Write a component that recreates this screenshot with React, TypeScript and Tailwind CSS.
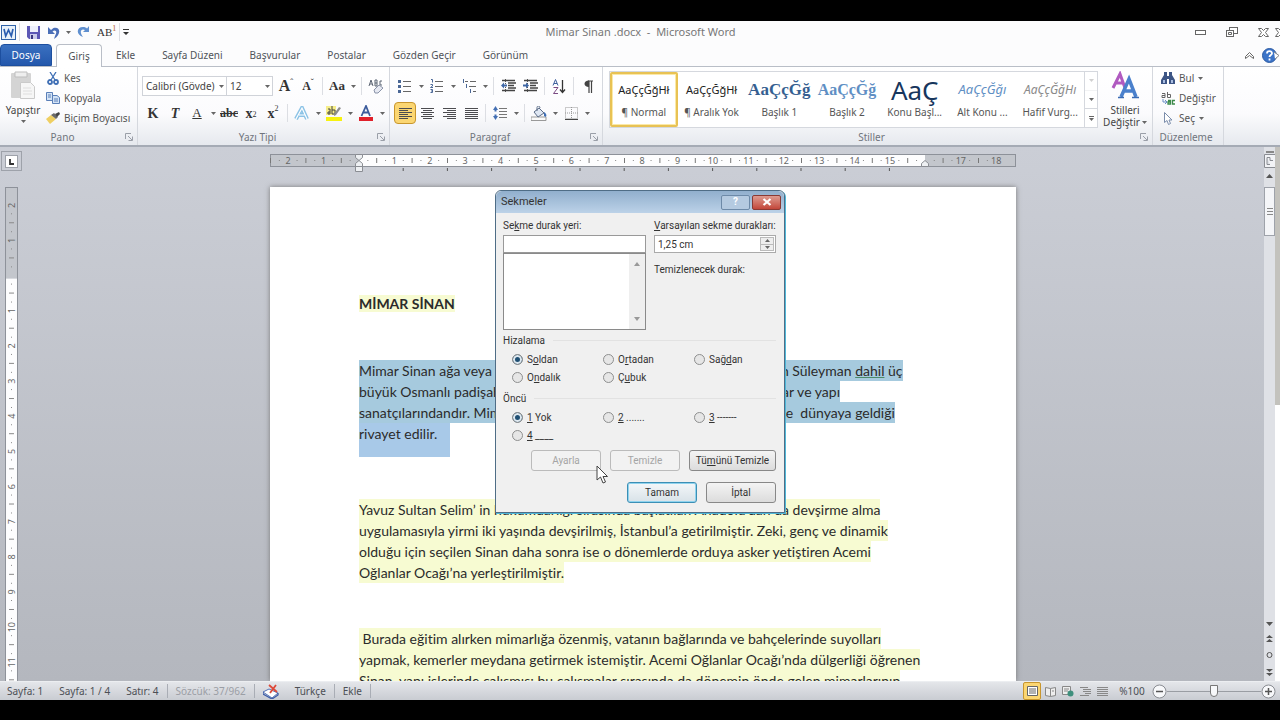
import type { ReactNode } from 'react'
import clsx from 'clsx'

const tabs = ['Ekle', 'Sayfa Düzeni', 'Başvurular', 'Postalar', 'Gözden Geçir', 'Görünüm']

const styles = [
  { name: '¶ Normal', sample: 'AaÇçĞğHł', look: 'text-[11px] text-[#222]' },
  { name: '¶ Aralık Yok', sample: 'AaÇçĞğHł', look: 'text-[11px] text-[#222]' },
  { name: 'Başlık 1', sample: 'AaÇçĞğ', look: "font-['Liberation_Serif',serif] text-[17px] font-bold text-[#365f91]" },
  { name: 'Başlık 2', sample: 'AaÇçĞğ', look: "font-['Liberation_Serif',serif] text-[16px] font-bold text-[#5f8fc4]" },
  { name: 'Konu Başl...', sample: 'AaÇ', look: 'text-[26px] text-[#17365d]' },
  { name: 'Alt Konu ...', sample: 'AaÇçĞğı', look: 'text-[13px] italic text-[#5f8fc4]' },
  { name: 'Hafif Vurg...', sample: 'AaÇçĞğHı', look: 'text-[12px] italic text-[#8a8a8a]' },
]

const second = [
  'Yavuz Sultan Selim’ in hükümdarlığı sırasında başlatılan Anadolu’dan da devşirme alma',
  'uygulamasıyla yirmi iki yaşında devşirilmiş, İstanbul’a getirilmiştir. Zeki, genç ve dinamik',
  'olduğu için seçilen Sinan daha sonra ise o dönemlerde orduya asker yetiştiren Acemi',
  'Oğlanlar Ocağı’na yerleştirilmiştir.',
]

const third = [
  ' Burada eğitim alırken mimarlığa özenmiş, vatanın bağlarında ve bahçelerinde suyolları',
  'yapmak, kemerler meydana getirmek istemiştir. Acemi Oğlanlar Ocağı’nda dülgerliği öğrenen',
  'Sinan, yapı işlerinde çalışmış; bu çalışmalar sırasında da dönemin önde gelen mimarlarının',
]

const Caret = () => (
  <svg width="5" height="3" viewBox="0 0 5 3" fill="#666">
    <path d="M0 0h5L2.5 3z" />
  </svg>
)

const Sep = () => (
  <div className="flex h-[18px] w-[7px] justify-center">
    <div className="w-px bg-[#dcdee3]" />
  </div>
)

function Tool({ label, caret, active, children }: { label: string; caret?: boolean; active?: boolean; children: ReactNode }) {
  return (
    <button type="button" aria-label={label} className="flex h-[22px] items-center">
      <span
        className={clsx(
          'flex h-[22px] w-[22px] items-center justify-center',
          active && 'rounded-sm border border-[#c8962e] bg-[#fbd672]'
        )}
      >
        {children}
      </span>
      {caret && (
        <span className="flex w-[10px] justify-center">
          <Caret />
        </span>
      )}
    </button>
  )
}

function Group({ title, launcher, className, children }: { title: string; launcher?: boolean; className?: string; children: ReactNode }) {
  return (
    <section className={clsx('flex shrink-0 flex-col border-r border-[#d5d8de]', className)}>
      <div className="flex h-16 items-start">{children}</div>
      <div className="flex h-4 items-center pr-1 text-[#70757d]">
        <span className="flex-1 text-center">{title}</span>
        {launcher && (
          <svg width="8" height="8" viewBox="0 0 8 8" fill="none" stroke="#9a9fa8">
            <path d="M.5 6V.5H6M3 3l4 4M7.500 3.500v4h-4" />
          </svg>
        )}
      </div>
    </section>
  )
}

function Lines({ kind }: { kind: 'left' | 'center' | 'right' | 'justify' }) {
  const paths = {
    left: 'M0 .5h13M0 2.500h9M0 4.500h13M0 6.500h9M0 8.500h13M0 10.500h9',
    center: 'M0 .5h13M2 2.500h9M0 4.500h13M2 6.500h9M0 8.500h13M2 10.500h9',
    right: 'M0 .5h13M4 2.500h9M0 4.500h13M4 6.500h9M0 8.500h13M4 10.500h9',
    justify: 'M0 .5h13M0 2.500h13M0 4.500h13M0 6.500h13M0 8.500h13M0 10.500h13',
  }
  return (
    <svg width="13" height="11" viewBox="0 0 13 11" stroke="#4c4c50">
      <path d={paths[kind]} />
    </svg>
  )
}

function ListIcon({ kind }: { kind: 'bullet' | 'number' | 'multi' }) {
  return (
    <svg width="14" height="14" viewBox="0 0 14 14">
      {kind === 'bullet' && (
        <>
          <path d="M0 1h3v3H0zM0 6h3v3H0zM0 11h3v3H0z" fill="#4a6796" />
          <path d="M5 2.500h8M5 7.500h8M5 12.500h8" stroke="#666" />
        </>
      )}
      {kind === 'number' && (
        <>
          <path d="M1 .5h1.500v3M.5 5.500h2v1.500l-2 1.500h2.500M.5 10.500h2v3h-2M1 12h1" stroke="#4a6796" fill="none" />
          <path d="M5 2.500h8M5 7.500h8M5 12.500h8" stroke="#666" />
        </>
      )}
      {kind === 'multi' && (
        <>
          <path d="M1.500 0v4M4.500 5v4M8.500 10v4" stroke="#4a6796" />
          <path d="M3 2.500h3M8 2.500h6M7 7.500h7M11 12.500h3" stroke="#666" />
        </>
      )}
    </svg>
  )
}

function IndentIcon({ out }: { out?: boolean }) {
  return (
    <svg width="15" height="14" viewBox="0 0 15 14">
      <path d="M1 1.500h13M7 4h8M7 6.500h6M7 9h8M1 11.500h13" stroke="#444" strokeWidth="1.300" />
      <path d="M4.500 0v14" stroke="#555" strokeDasharray="1 1" />
      <path d={out ? 'M0 6.500l3-3v2h3v2H3v2z' : 'M6 6.500l-3-3v2H0v2h3v2z'} fill="#3f67a5" />
    </svg>
  )
}

function TitleBar() {
  return (
    <header className="flex h-[22px] shrink-0 items-center bg-[#fcfcfd]">
      <div className="flex flex-1 items-center pl-px">
        <svg width="15" height="15" viewBox="0 0 15 15">
          <rect x=".5" y=".5" width="14" height="14" fill="#e8f1fa" stroke="#2f62a8" />
          <path d="M3 4l1.700 7L7.500 5l2.800 6L12 4" fill="none" stroke="#2a5db0" strokeWidth="1.700" />
        </svg>
        <Sep />
        <button type="button" aria-label="Kaydet" className="ml-1">
          <svg width="13" height="13" viewBox="0 0 13 13">
            <path d="M0 0h13v13H2L0 11z" fill="#5b57b5" />
            <path d="M3 0h8v6H3z" fill="#eef0fb" />
            <path d="M3 8h7v5H3z" fill="#c9cbea" />
            <path d="M4 9h2v4H4z" fill="#39367f" />
          </svg>
        </button>
        <button type="button" aria-label="Geri al" className="ml-2 flex items-center gap-1.5">
          <svg width="12" height="13" viewBox="0 0 12 13">
            <path d="M0 1v7h7L4.500 5.500C7 3 10 5 7 10l-1 3c8-5 6-13-.5-11L3 4z" fill="#4b6fb8" />
          </svg>
          <Caret />
        </button>
        <button type="button" aria-label="Yinele" className="ml-1.5">
          <svg width="12" height="12" viewBox="0 0 12 12">
            <path d="M12 0v6H6l2-2C4 2 2 6 6 11-1 9-1 1 6 1c2 0 3 .5 4 1.500z" fill="#5f8fcf" />
          </svg>
        </button>
        <button type="button" className="ml-2 flex items-start font-['Liberation_Serif',serif] text-[11px] leading-4 text-[#333]">
          AB<span className="text-[8px] leading-[10px] text-[#b3622d]">1</span>
        </button>
        <Sep />
        <svg width="6" height="6" viewBox="0 0 6 6" fill="#333">
          <path d="M0 0h6v1H0zM0 3h6L3 6z" />
        </svg>
      </div>
      <h1 className="text-[11px] whitespace-pre text-[#777]">Mimar Sinan .docx  -  Microsoft Word</h1>
      <div className="flex flex-1 items-center justify-end gap-5 overflow-hidden">
        <svg width="11" height="5" viewBox="0 0 11 5">
          <rect x=".5" y=".5" width="10" height="4" fill="#fff" stroke="#666" />
        </svg>
        <svg width="12" height="10" viewBox="0 0 12 10" fill="#fff" stroke="#666">
          <rect x="3.500" y=".5" width="8" height="6" />
          <rect x=".5" y="3.500" width="7" height="6" />
          <path d="M2.500 5.500h3v2h-3z" />
        </svg>
        <div className="flex gap-1.5">
          <svg width="11" height="9" viewBox="0 0 11 9" fill="#fff" stroke="#666">
            <path d="M.5.5h3l2 2 2-2h3L7.500 4.500l3 4h-3l-2-2-2 2h-3l3-4z" />
          </svg>
          <svg width="5" height="9" viewBox="0 0 5 9" fill="#fff" stroke="#666">
            <path d="M.5.5h3l2 2v4l-2 2h-3l3-4z" />
          </svg>
        </div>
      </div>
    </header>
  )
}

function TabRow() {
  return (
    <nav className="flex h-6 shrink-0 items-end border-b border-[#b9bec7] bg-[#fcfcfd] text-[#4f5359]">
      <button type="button" className="h-[22px] w-[52px] rounded-t-sm border border-[#1d4f9f] bg-linear-to-b from-[#3a70c0] to-[#2458ac] text-white">
        Dosya
      </button>
      <button type="button" className="ml-1 -mb-px h-[23px] w-[46px] rounded-t-sm border border-b-0 border-[#b9bec7] bg-white">
        Giriş
      </button>
      <div className="ml-[14px] flex h-[22px] flex-1 items-center gap-[27px]">
        {tabs.map((tab) => (
          <button key={tab} type="button">
            {tab}
          </button>
        ))}
      </div>
      <div className="flex h-[22px] items-center gap-2">
        <svg width="9" height="7" viewBox="0 0 9 7" fill="#fff" stroke="#666">
          <path d="M.5 4.500l4-4 4 4v2l-4-3-4 3z" />
        </svg>
        <svg width="18" height="15" viewBox="0 0 18 15">
          <circle cx="7.500" cy="7.500" r="7" fill="#3c74c8" stroke="#2d5ba3" />
          <path d="M5 5.500c0-3 5-3 5-.2C10 7 7.500 7 7.500 9M7.500 10.500v2" fill="none" stroke="#fff" strokeWidth="1.800" />
          <path d="M12 4l5 3.500-4 3.500" fill="#fff" stroke="#888" />
        </svg>
      </div>
    </nav>
  )
}

function ClipboardGroup() {
  return (
    <Group title="Pano" launcher className="w-[138px]">
      <button type="button" className="flex w-[46px] flex-col items-center pt-1">
        <svg width="26" height="29" viewBox="0 0 26 29">
          <rect x="1" y="2" width="20" height="25" rx="1" fill="#d4d4d4" />
          <path d="M5 1h12v5H5z" fill="#eee" stroke="#bdbdbd" />
          <path d="M10.500 11.500h10l4 4v12h-14z" fill="#f6f6f6" stroke="#cacaca" />
          <path d="M13 17h8M13 20h9M13 23h9" stroke="#dedede" />
        </svg>
        <span className="pt-0.5 leading-4 text-[#444]">Yapıştır</span>
        <span className="pt-0.5">
          <Caret />
        </span>
      </button>
      <div className="flex flex-col text-[#555]">
        <button type="button" className="mt-px flex h-5 items-center gap-1">
          <svg width="14" height="13" viewBox="0 0 14 13" fill="none" stroke="#3f6fb5">
            <path d="M4 0l5 8M10 0L5 8" strokeWidth="1.300" />
            <circle cx="4" cy="10" r="2" strokeWidth="1.800" />
            <circle cx="10" cy="10" r="2" strokeWidth="1.800" />
          </svg>
          Kes
        </button>
        <button type="button" className="flex h-5 items-center gap-1">
          <svg width="14" height="12" viewBox="0 0 14 12" fill="#d3e3f6" stroke="#5a7fb8">
            <path d="M.5.5h6v8h-6z" />
            <path d="M6.500 3.500h4.500l2.500 2v6h-7z" />
            <path d="M2 3h3M2 5h3M8 7h4M8 9h4" />
          </svg>
          Kopyala
        </button>
        <button type="button" className="flex h-5 items-center gap-1">
          <svg width="14" height="12" viewBox="0 0 14 12">
            <path d="M0 7l5-4 5 4-6 5z" fill="#efcf62" />
            <path d="M5 3l3-2 4 4-2 2z" fill="#6a6a6a" />
            <path d="M9 2l4-2 1 2-3 3z" fill="#444" />
          </svg>
          Biçim Boyacısı
        </button>
      </div>
    </Group>
  )
}

function FontGroup() {
  return (
    <Group title="Yazı Tipi" launcher className="w-[252px]">
      <div className="flex flex-col gap-[5px] pt-2 pl-1 font-['Liberation_Serif',serif] text-[#333]">
        <div className="flex items-center">
          <div className="mr-0.5 flex h-5 w-[131px] border border-[#d0d3d9] bg-white font-['Noto_Sans',sans-serif] text-[#444]">
            <label className="flex flex-1 items-center border-r border-[#d0d3d9] pr-0.5">
              <select aria-label="Yazı tipi" className="min-w-0 flex-1 appearance-none pl-[3px]">
                <option>Calibri (Gövde)</option>
              </select>
              <Caret />
            </label>
            <label className="flex w-[45px] items-center pr-0.5">
              <select aria-label="Yazı tipi boyutu" className="min-w-0 flex-1 appearance-none pl-[3px]">
                <option>12</option>
              </select>
              <Caret />
            </label>
          </div>
          <Tool label="Yazı tipini büyüt">
            <span className="text-[16px] font-bold">A</span>
            <sup className="text-[9px]">ˆ</sup>
          </Tool>
          <Tool label="Yazı tipini küçült">
            <span className="text-[12px] font-bold">A</span>
            <sup className="text-[9px]">ˇ</sup>
          </Tool>
          <Sep />
          <Tool label="Büyük/küçük harf" caret>
            <span className="text-[13px] font-bold">Aa</span>
          </Tool>
          <Sep />
          <Tool label="Biçimlendirmeyi temizle">
            <svg width="16" height="16" viewBox="0 0 16 16">
              <path d="M1 8l2-6 2 6M2 6h2M7 2v6M7 2h2v3H7M9 5v3H7M14 3h-2v4h2" fill="none" stroke="#5b6472" />
              <path d="M6 12l5-5 4 3-5 5H7z" fill="#e6e9f2" stroke="#8a93a8" />
            </svg>
          </Tool>
        </div>
        <div className="flex items-center">
          <Tool label="Kalın"><b className="text-[14px]">K</b></Tool>
          <Tool label="İtalik"><i className="text-[14px] font-bold">T</i></Tool>
          <Tool label="Altı çizili" caret><u className="text-[13px]">A</u></Tool>
          <Tool label="Üstü çizili"><s className="text-[12px] font-bold">abc</s></Tool>
          <Tool label="Alt simge">
            <b className="text-[14px]">x</b>
            <sub className="text-[8px]">2</sub>
          </Tool>
          <Tool label="Üst simge">
            <b className="text-[14px]">x</b>
            <sup className="text-[8px]">2</sup>
          </Tool>
          <Sep />
          <Tool label="Metin efektleri" caret>
            <svg width="16" height="14" viewBox="0 0 16 14" fill="none">
              <path d="M2 13L8 2l5 11M5 9h6" stroke="#8cc3e6" strokeWidth="4" />
              <path d="M2 13L8 2l5 11M5 9h6" stroke="#fff" strokeWidth="1.200" />
            </svg>
          </Tool>
          <Tool label="Vurgu rengi" caret>
            <svg width="16" height="16" viewBox="0 0 16 16">
              <path d="M0 12h16v4H0z" fill="#f7f20f" />
              <path d="M0 1h10v9H0z" fill="#f6ee8a" />
              <path d="M2 4h2v5H2V7h2M6 1v8h3V5H6" fill="none" stroke="#444" />
              <path d="M8 9l5-7 2 1-5 7-2 1z" fill="#8d8d8d" />
            </svg>
          </Tool>
          <Tool label="Yazı tipi rengi" caret>
            <svg width="16" height="16" viewBox="0 0 16 16">
              <path d="M1 12h14v4H1z" fill="#e0202a" />
              <path d="M3.500 11L8 1l4 10M5 7.500h5" fill="none" stroke="#3c5c9c" strokeWidth="1.800" />
            </svg>
          </Tool>
        </div>
      </div>
    </Group>
  )
}

function ParagraphGroup() {
  return (
    <Group title="Paragraf" launcher className="w-[213px]">
      <div className="flex flex-col gap-[5px] pt-2 pl-1">
        <div className="flex items-center">
          <Tool label="Madde işaretleri" caret><ListIcon kind="bullet" /></Tool>
          <Tool label="Numaralandırma" caret><ListIcon kind="number" /></Tool>
          <Tool label="Çok düzeyli liste" caret><ListIcon kind="multi" /></Tool>
          <Sep />
          <Tool label="Girintiyi azalt"><IndentIcon out /></Tool>
          <Tool label="Girintiyi artır"><IndentIcon /></Tool>
          <Sep />
          <Tool label="Sırala">
            <svg width="14" height="15" viewBox="0 0 14 15" fill="none">
              <path d="M1 6.500L3.500.5 6 6.500M2 4.500h3" stroke="#3d5f9c" />
              <path d="M1.500 8.500H6l-4.500 6H6" stroke="#7a4a83" />
              <path d="M10.500 1v12M8 10.500l2.500 3 2.500-3" stroke="#333" strokeWidth="1.300" />
            </svg>
          </Tool>
          <Sep />
          <Tool label="Tümünü göster">
            <svg width="9" height="13" viewBox="0 0 9 13">
              <path d="M4 1h5M5 1v12M7.500 1v12" stroke="#444" strokeWidth="1.200" />
              <path d="M5 .5C-1 .5-1 7 5 7z" fill="#444" />
            </svg>
          </Tool>
        </div>
        <div className="flex items-center">
          <Tool label="Sola hizala" active><Lines kind="left" /></Tool>
          <Tool label="Ortala"><Lines kind="center" /></Tool>
          <Tool label="Sağa hizala"><Lines kind="right" /></Tool>
          <Tool label="İki yana yasla"><Lines kind="justify" /></Tool>
          <Sep />
          <Tool label="Satır aralığı" caret>
            <svg width="14" height="14" viewBox="0 0 14 14">
              <path d="M6 2.500h8M6 5.500h8M6 8.500h8M6 11.500h8" stroke="#777" />
              <path d="M2.500 0L5 4H3.500v1.500h-2V4H0zM2.500 14L5 10H3.500V8.500h-2V10H0z" fill="#4470b4" />
            </svg>
          </Tool>
          <Sep />
          <Tool label="Gölgelendirme" caret>
            <svg width="16" height="15" viewBox="0 0 16 15">
              <path d="M0 11h15v3.500H0z" fill="#fafafa" stroke="#999" />
              <path d="M3 6l5-4 5 5-6 4z" fill="#dfe7f3" stroke="#5a6b86" />
              <path d="M6 5V1.500C6-.5 9-.5 9 2" fill="none" stroke="#5a6b86" />
              <path d="M13 6c2 1 3 3 2 5l-2-1z" fill="#3f6fb5" />
            </svg>
          </Tool>
          <Tool label="Kenarlıklar" caret>
            <svg width="13" height="13" viewBox="0 0 13 13" fill="none" stroke="#999">
              <path d="M.5.5h12v11H.5zM6.500 0v12M0 6h13" strokeDasharray="1 1" />
              <path d="M0 12.500h13" stroke="#444" />
            </svg>
          </Tool>
        </div>
      </div>
    </Group>
  )
}

function StylesGroup() {
  return (
    <Group title="Stiller" launcher className="w-[550px]">
      <div className="mt-1 ml-1.5 flex h-[57px] w-[489px] border border-[#d5d8de] bg-white">
        <div className="grid flex-1 grid-cols-7">
          {styles.map((s, i) => (
            <button
              key={s.name}
              type="button"
              className={clsx(
                'flex flex-col items-center border-2 pt-0.5',
                i === 0 ? 'rounded-xs border-[#e8c254] ring-1 ring-[#fbe9a8] ring-inset' : 'border-transparent'
              )}
            >
              <span className={clsx('flex h-7 items-center whitespace-nowrap', s.look)}>{s.sample}</span>
              <span className="leading-4 whitespace-nowrap text-[#555]">{s.name}</span>
            </button>
          ))}
        </div>
        <div className="flex w-[13px] flex-col divide-y divide-[#d5d8de] border-l border-[#d5d8de]">
          <button type="button" aria-label="Yukarı" className="flex flex-1 items-center justify-center opacity-30"><Caret /></button>
          <button type="button" aria-label="Aşağı" className="flex flex-1 items-center justify-center"><Caret /></button>
          <button type="button" aria-label="Diğer" className="flex flex-1 flex-col items-center justify-center gap-px">
            <span className="h-px w-[5px] bg-[#666]" />
            <Caret />
          </button>
        </div>
      </div>
      <button type="button" className="flex flex-1 flex-col items-center pt-1 text-[#444]">
        <svg width="28" height="29" viewBox="0 0 28 29" fill="none">
          <path d="M2 17L9 3l5 14M4 12h8" stroke="#b05ac0" strokeWidth="3" />
          <path d="M10 26l8-18 7 18M12 20h10" stroke="#4a80cc" strokeWidth="3.500" />
          <path d="M7 26.500h6M21 26.500h7" stroke="#3a6bb5" strokeWidth="1.500" />
        </svg>
        <span className="pt-1 leading-3">Stilleri</span>
        <span className="flex items-center gap-0.5 leading-3">
          Değiştir <Caret />
        </span>
      </button>
    </Group>
  )
}

function EditGroup() {
  return (
    <Group title="Düzenleme" className="w-[71px]">
      <div className="flex flex-col pl-2 text-[#555]">
        <button type="button" className="mt-px flex h-5 items-center gap-1">
          <svg width="14" height="12" viewBox="0 0 14 12" fill="#3d5585">
            <path d="M3 0h3v4h2V0h3v3l3 5v4H8V7H6v5H0V8l3-5z" />
            <path d="M2 8h2v3H2zM10 8h2v3h-2z" fill="#a9bde0" />
          </svg>
          Bul <Caret />
        </button>
        <button type="button" className="flex h-5 items-center gap-1">
          <svg width="14" height="13" viewBox="0 0 14 13" fill="none">
            <path d="M1 1.500h3v4H1v-2h3M6.500 0v5.500h3v-3h-3" stroke="#666" />
            <path d="M2 7v3h3M4 8l2 2-2 2" stroke="#6a8fc6" />
            <path d="M7 8.500h2.500v3.500H7v-2h2.500M14 8.500h-2.500v3.500H14" stroke="#3d8a4b" strokeWidth="1.300" />
          </svg>
          Değiştir
        </button>
        <button type="button" className="flex h-5 items-center gap-1">
          <svg width="14" height="13" viewBox="0 0 14 13" fill="#fff" stroke="#7b8dab">
            <path d="M3.500.5v10l2.500-2 1.500 4 2-1-1.500-3.500h3z" />
          </svg>
          Seç <Caret />
        </button>
      </div>
    </Group>
  )
}

const CM = 35.4

function HorizontalRuler() {
  const marks = Array.from({ length: 21 }, (_, i) => i - 2)
  const zero = 89
  return (
    <svg width="746" height="18" viewBox="0 0 746 18" className="shrink-0">
      <rect x=".5" y=".5" width="745" height="12" fill="#c3c6cc" stroke="#8d9199" />
      <rect x={zero} y="1" width="566" height="11" fill="#fdfdfe" />
      {marks.map((n) => (
        <g key={n}>
          {n !== 0 && n !== 16 && (
            <text x={zero + n * CM} y="10" textAnchor="middle" fontSize="9" fill="#666">
              {Math.abs(n)}
            </text>
          )}
          <path d={`M${zero + (n - 0.5) * CM} 4v5`} stroke="#777" />
          <path d={`M${zero + (n - 0.25) * CM} 6v1M${zero + (n - 0.75) * CM} 6v1`} stroke="#888" />
        </g>
      ))}
      {Array.from({ length: 12 }, (_, i) => (
        <path key={i} d={`M${zero + (i + 1) * 44.2} 14v3`} stroke="#555" />
      ))}
      <path d="M85.500.5h7v3l-3.500 3-3.500-3zM85.500 12.500v-3l3.500-3 3.500 3v3zM85.500 12.500h7v5h-7z" fill="#eef0f3" stroke="#8a8d93" />
      <path d="M651.500 12.500v-3l3.500-3 3.500 3v3z" fill="#eef0f3" stroke="#8a8d93" />
    </svg>
  )
}

function VerticalRuler() {
  const marks = Array.from({ length: 14 }, (_, i) => i - 2)
  return (
    <svg width="13" height="496" viewBox="0 0 13 496">
      <rect x=".5" y=".5" width="12" height="600" fill="#c3c6cc" stroke="#8d9199" />
      <rect x="1" y="92" width="11" height="500" fill="#fdfdfe" />
      {marks.map((n) => (
        <g key={n} transform={`translate(10 ${89 + n * 35.3}) rotate(-90)`}>
          {n !== 0 && (
            <text textAnchor="middle" fontSize="9" fill="#666">
              {Math.abs(n)}
            </text>
          )}
          <path d="M-17.500-6v5M-8.500-4v1M-26.500-4v1" stroke="#888" />
        </g>
      ))}
    </svg>
  )
}

function Line({ selected, children }: { selected?: boolean; children: ReactNode }) {
  return (
    <span className="block">
      <span className={clsx('inline-block', selected ? 'bg-[#a6cade]' : 'bg-[#f7fbd2]')}>{children}</span>
    </span>
  )
}

function Workspace() {
  return (
    <main className="flex min-h-0 flex-1 bg-linear-to-b from-[#cbced6] to-[#b4b7be]">
      <aside className="flex w-[22px] shrink-0 flex-col items-center gap-[16px] overflow-hidden pt-1">
        <button type="button" aria-label="Sekme türü" className="flex h-5 w-[21px] shrink-0 items-center justify-center border border-[#9ea2aa]">
          <svg width="13" height="13" viewBox="0 0 13 13">
            <rect x=".5" y=".5" width="12" height="12" fill="#fff" stroke="#9ea2aa" />
            <path d="M5 4v5h4" fill="none" stroke="#333" strokeWidth="1.800" />
          </svg>
        </button>
        <VerticalRuler />
      </aside>
      <div className="flex flex-1 flex-col items-center overflow-hidden pt-[7px]">
        <HorizontalRuler />
        <article className="mt-[15px] w-[746px] flex-1 overflow-hidden bg-white px-[89px] pt-[106px] font-['Lato',sans-serif] text-[14px] leading-[21px] whitespace-pre text-[#2b2b2b] shadow-[0_0_5px_#777] [font-variant-ligatures:none]">
          <h2 className="font-bold">
            <span className="bg-[#f7fbd2]">MİMAR SİNAN</span>
          </h2>
          <p className="mt-[46px]">
            <Line selected>
              Mimar Sinan ağa veya Koca Mi’mâr Sinân Âğâ, padişah I. Kanuni Sultan Süleyman{' '}
              <span className="underline decoration-[#4a8a6a]">dahil</span> üç
            </Line>
            <Line selected>büyük Osmanlı padişahına baş mimarlık yapmış, ünlü bir Osmanlı mimar ve yapı</Line>
            <Line selected>sanatçılarındandır. Mimar Sinan’ın 1490’da Kayseri’nin Ağırnas köyünde  dünyaya geldiği</Line>
            <span className="block h-[34px] w-[91px] bg-[#a8c9e8]">rivayet edilir.</span>
          </p>
          <p className="mt-[42px]">
            {second.map((line) => (
              <Line key={line}>{line}</Line>
            ))}
          </p>
          <p className="mt-[45px]">
            {third.map((line) => (
              <Line key={line}>{line}</Line>
            ))}
          </p>
        </article>
      </div>
      <div className="flex w-[11px] shrink-0 flex-col items-center bg-[#dfe1e6]">
        <span className="mt-1 h-0.5 w-2 bg-[#888]" />
        <svg width="11" height="16" viewBox="0 0 11 16" fill="#f2f3f6" stroke="#8a8d93">
          <path d="M.5 1.500h12v13H.5zM3 4.500h3v3h3M3 4.500v7h3" />
        </svg>
        <svg width="7" height="12" viewBox="0 0 7 12" fill="#555"><path d="M0 9l3.500-4L7 9z" /></svg>
        <div className="mt-1.5 flex h-[49px] w-full flex-col items-center justify-center gap-0.5 border border-[#9ea2aa] bg-[#f4f5f8]">
          <span className="h-px w-1.5 bg-[#888]" />
          <span className="h-px w-1.5 bg-[#888]" />
          <span className="h-px w-1.5 bg-[#888]" />
        </div>
        <div className="flex-1" />
        <svg width="9" height="62" viewBox="0 0 9 62" fill="#555">
          <path d="M1 3h7L4.500 7zM1 19l3.500-3L8 19zM1 23l3.500-3L8 23zM1 50h7l-3.500 3zM1 54h7l-3.500 3z" />
          <circle cx="4.500" cy="36" r="2.500" fill="none" stroke="#555" />
        </svg>
      </div>
      <div className="flex w-[5px] shrink-0 flex-col">
        <div className="h-[258px] bg-[#c3c2bd]" />
        <div className="flex-1 bg-white" />
      </div>
    </main>
  )
}

function Radio({ name, value, checked, children }: { name: string; value: string; checked?: boolean; children: ReactNode }) {
  return (
    <label className="flex h-[18px] items-center gap-1">
      <input
        type="radio"
        name={name}
        value={value}
        defaultChecked={checked}
        className="size-[11px] appearance-none rounded-full border border-[#8e8f8f] bg-[#e6e6e6] checked:bg-[#1f4f73] checked:ring-2 checked:ring-[#dfe9f0] checked:ring-inset"
      />
      <span>{children}</span>
    </label>
  )
}

function Section({ title, children }: { title: string; children: ReactNode }) {
  return (
    <fieldset aria-label={title}>
      <div className="flex h-5 items-center gap-2">
        {title}
        <span className="h-px flex-1 bg-[#e2e2e2]" />
      </div>
      <div className="grid grid-cols-[91px_91px_1fr] pl-[9px]">{children}</div>
    </fieldset>
  )
}

const dialogButton = 'h-[21px] rounded-[3px] border border-[#888] bg-linear-to-b from-[#f4f4f4] to-[#dcdcdc]'

function TabsDialog() {
  return (
    <div
      role="dialog"
      aria-label="Sekmeler"
      className="absolute top-[190px] left-1/2 w-[290px] -translate-x-1/2 rounded-t-md border border-[#4f6d86] bg-[#f0f0f0] pb-[9px] font-['Roboto',sans-serif] text-[#333] shadow-[1px_1px_0_#4fb8d8]"
    >
      <div className="flex h-[22px] items-center rounded-t-md bg-linear-to-b from-[#91afcd] to-[#bcd2e8] pr-[3px] pl-[5px]">
        <span className="flex-1 text-[11px]">Sekmeler</span>
        <button type="button" className="h-[15px] w-[29px] rounded-xs border border-[#6d8aa8] bg-[#b4cae0] text-[10px] leading-3 font-bold text-white">
          ?
        </button>
        <button type="button" aria-label="Kapat" className="ml-0.5 flex h-[15px] w-[29px] items-center justify-center rounded-xs border border-[#8a3a34] bg-linear-to-b from-[#dd9a90] to-[#c2463a]">
          <svg width="10" height="8" viewBox="0 0 10 8">
            <path d="M1.500 1l7 6M8.500 1l-7 6" stroke="#fff" strokeWidth="2.200" />
          </svg>
        </button>
      </div>
      <form className="pt-1 pr-2 pl-[7px]">
        <div className="flex gap-2">
          <div className="flex w-[143px] flex-col">
            <label htmlFor="stop" className="h-[18px] leading-[18px]">Se<u>k</u>me durak yeri:</label>
            <input id="stop" type="text" className="h-[18px] border border-[#999] bg-white px-1" />
            <div className="flex h-[77px] justify-end border border-[#8a8a8a] bg-white">
              <div className="flex w-4 flex-col items-center justify-between bg-[#efefef] py-2">
                <svg width="6" height="4" viewBox="0 0 6 4" fill="#999"><path d="M0 4l3-4 3 4z" /></svg>
                <svg width="6" height="4" viewBox="0 0 6 4" fill="#999"><path d="M0 0h6L3 4z" /></svg>
              </div>
            </div>
          </div>
          <div className="flex min-w-0 flex-1 flex-col whitespace-nowrap">
            <label htmlFor="default" className="h-[18px] leading-[18px]"><u>V</u>arsayılan sekme durakları:</label>
            <div className="flex h-[18px] items-center border border-[#aaa] bg-white pr-px">
              <input id="default" type="text" defaultValue="1,25 cm" className="min-w-0 flex-1 px-[3px]" />
              <div className="flex h-3.5 w-3.5 flex-col items-center justify-evenly border border-[#bbb] bg-[#eee]">
                <svg width="5" height="3" viewBox="0 0 5 3" fill="#666"><path d="M0 3l2.500-3L5 3z" /></svg>
                <span className="h-px w-full bg-[#bbb]" />
                <Caret />
              </div>
            </div>
            <span className="mt-2 leading-[18px]">Temizlenecek durak:</span>
          </div>
        </div>
        <Section title="Hizalama">
          <Radio name="align" value="left" checked>S<u>o</u>ldan</Radio>
          <Radio name="align" value="center">O<u>r</u>tadan</Radio>
          <Radio name="align" value="right">Sağ<u>d</u>an</Radio>
          <Radio name="align" value="decimal">O<u>n</u>dalık</Radio>
          <Radio name="align" value="bar">Ç<u>u</u>buk</Radio>
        </Section>
        <div className="h-0.5" />
        <Section title="Öncü">
          <Radio name="leader" value="1" checked><u>1</u> Yok</Radio>
          <Radio name="leader" value="2"><u>2</u> .......</Radio>
          <Radio name="leader" value="3"><u>3</u> -------</Radio>
          <Radio name="leader" value="4"><u>4</u> ____</Radio>
        </Section>
        <div className="mt-1.5 flex justify-end gap-[9px]">
          <button type="button" disabled className="h-[21px] w-[70px] rounded-[3px] border border-[#bbb] bg-[#f2f2f2] text-[#a5a5a5]">Ayarla</button>
          <button type="button" disabled className="h-[21px] w-[70px] rounded-[3px] border border-[#bbb] bg-[#f2f2f2] text-[#a5a5a5]">Temizle</button>
          <button type="button" className={clsx(dialogButton, 'w-[87px]')}>Tü<u>m</u>ünü Temizle</button>
        </div>
        <div className="mt-[11px] flex justify-end gap-[9px]">
          <button type="button" className="h-[21px] w-[70px] rounded-[3px] border border-[#3c8fb5] bg-linear-to-b from-[#f4f7f9] to-[#d8e2e8] ring-1 ring-[#8fd3ee] ring-inset">Tamam</button>
          <button type="button" className={clsx(dialogButton, 'w-[70px]')}>İptal</button>
        </div>
      </form>
      <svg width="13" height="20" viewBox="0 0 13 20" className="absolute top-[274px] left-[100px]" fill="#fff" stroke="#444">
        <path d="M1 1v14l3.500-3 2.500 6 2.500-1L7 11.500h4.500z" />
      </svg>
    </div>
  )
}

function StatusBar() {
  const divider = <span className="h-3.5 w-px bg-[#a9adb5]" />
  return (
    <footer className="flex h-[19px] shrink-0 items-center overflow-hidden border-t border-[#eceef1] bg-linear-to-b from-[#e4e6ea] to-[#c9ccd2] text-[#4c4f55]">
      <div className="flex flex-1 items-center gap-2 pl-[7px]">
        <span className="mr-2">Sayfa: 1</span>
        <span className="mr-2">Sayfa: 1 / 4</span>
        <span>Satır: 4</span>
        {divider}
        <span className="text-[#9b9ea5]">Sözcük: 37/962</span>
        {divider}
        <svg width="16" height="15" viewBox="0 0 16 15">
          <path d="M0 8l6-3 9 4-6 5z" fill="#fff" stroke="#5573b4" />
          <path d="M0 8v2l9 5 6-4V9" fill="none" stroke="#3c5ca8" strokeWidth="1.300" />
          <path d="M6 1l8 7M13 1L7 9" stroke="#dd4a3a" strokeWidth="1.800" />
        </svg>
        <span className="ml-2">Türkçe</span>
        {divider}
        <span>Ekle</span>
        {divider}
      </div>
      <div className="flex items-center">
        <button type="button" aria-label="Sayfa düzeni" className="flex h-[18px] w-[18px] items-center justify-center rounded-xs border border-[#c8962e] bg-[#fbd672]">
          <svg width="11" height="10" viewBox="0 0 11 10" stroke="#666"><path d="M.5.5h10v9H.5z" fill="#fff" /><path d="M2 3h7M2 5h7M2 7h7" /></svg>
        </button>
        <div className="ml-1 flex items-center gap-1.5">
          <svg width="11" height="11" viewBox="0 0 11 11" fill="#eee" stroke="#888"><path d="M.5 1.500l5 1 5-1v8l-5 1-5-1zM5.500 2.500v8M7 5h2" /></svg>
          <svg width="12" height="11" viewBox="0 0 12 11"><path d="M.5.5h8v8h-8zM2 3h5M2 5h4" fill="#eee" stroke="#888" /><circle cx="8.500" cy="7.500" r="3" fill="#3e8f7d" /></svg>
          <svg width="11" height="10" viewBox="0 0 11 10" stroke="#888"><path d="M0 1.500h8M3 3.500h8M3 5.500h8M5 7.500h6M0 9.500h9" /></svg>
          <svg width="11" height="10" viewBox="0 0 11 10" stroke="#888"><path d="M0 1.500h11M0 3.500h11M0 5.500h11M0 7.500h11M0 9.500h11" /></svg>
        </div>
        <button type="button" className="mr-1 ml-2 w-8 text-center">%100</button>
        <button type="button" aria-label="Uzaklaştır">
          <svg width="15" height="15" viewBox="0 0 15 15"><circle cx="7.500" cy="7.500" r="6.500" fill="#f7f8fa" stroke="#8a8d93" /><path d="M4 7.500h7" stroke="#555" strokeWidth="1.500" /></svg>
        </button>
        <input
          type="range"
          aria-label="Yakınlaştırma"
          className="h-3 w-[94px] appearance-none bg-[linear-gradient(#9a9da3,#9a9da3)] bg-size-[100%_1px] bg-center bg-no-repeat [&::-webkit-slider-thumb]:h-3 [&::-webkit-slider-thumb]:w-2 [&::-webkit-slider-thumb]:appearance-none [&::-webkit-slider-thumb]:rounded-b-full [&::-webkit-slider-thumb]:border [&::-webkit-slider-thumb]:border-[#777] [&::-webkit-slider-thumb]:bg-[#f7f8fa]"
        />
        <button type="button" aria-label="Yakınlaştır" className="mr-1">
          <svg width="15" height="15" viewBox="0 0 15 15"><circle cx="7.500" cy="7.500" r="6.500" fill="#f7f8fa" stroke="#8a8d93" /><path d="M4 7.500h7M7.500 4v7" stroke="#555" strokeWidth="1.500" /></svg>
        </button>
      </div>
    </footer>
  )
}

export default function App() {
  return (
    <div className="relative flex h-screen flex-col overflow-hidden bg-black pt-[21px] pb-5 font-['Noto_Sans',sans-serif] text-[10px]">
      <TitleBar />
      <TabRow />
      <div className="flex h-20 shrink-0 overflow-hidden border-b-2 border-[#a5abb5] bg-linear-to-b from-white via-[#fbfbfd] via-60% to-[#e6e9ee]">
        <ClipboardGroup />
        <FontGroup />
        <ParagraphGroup />
        <StylesGroup />
        <EditGroup />
      </div>
      <Workspace />
      <StatusBar />
      <TabsDialog />
    </div>
  )
}
